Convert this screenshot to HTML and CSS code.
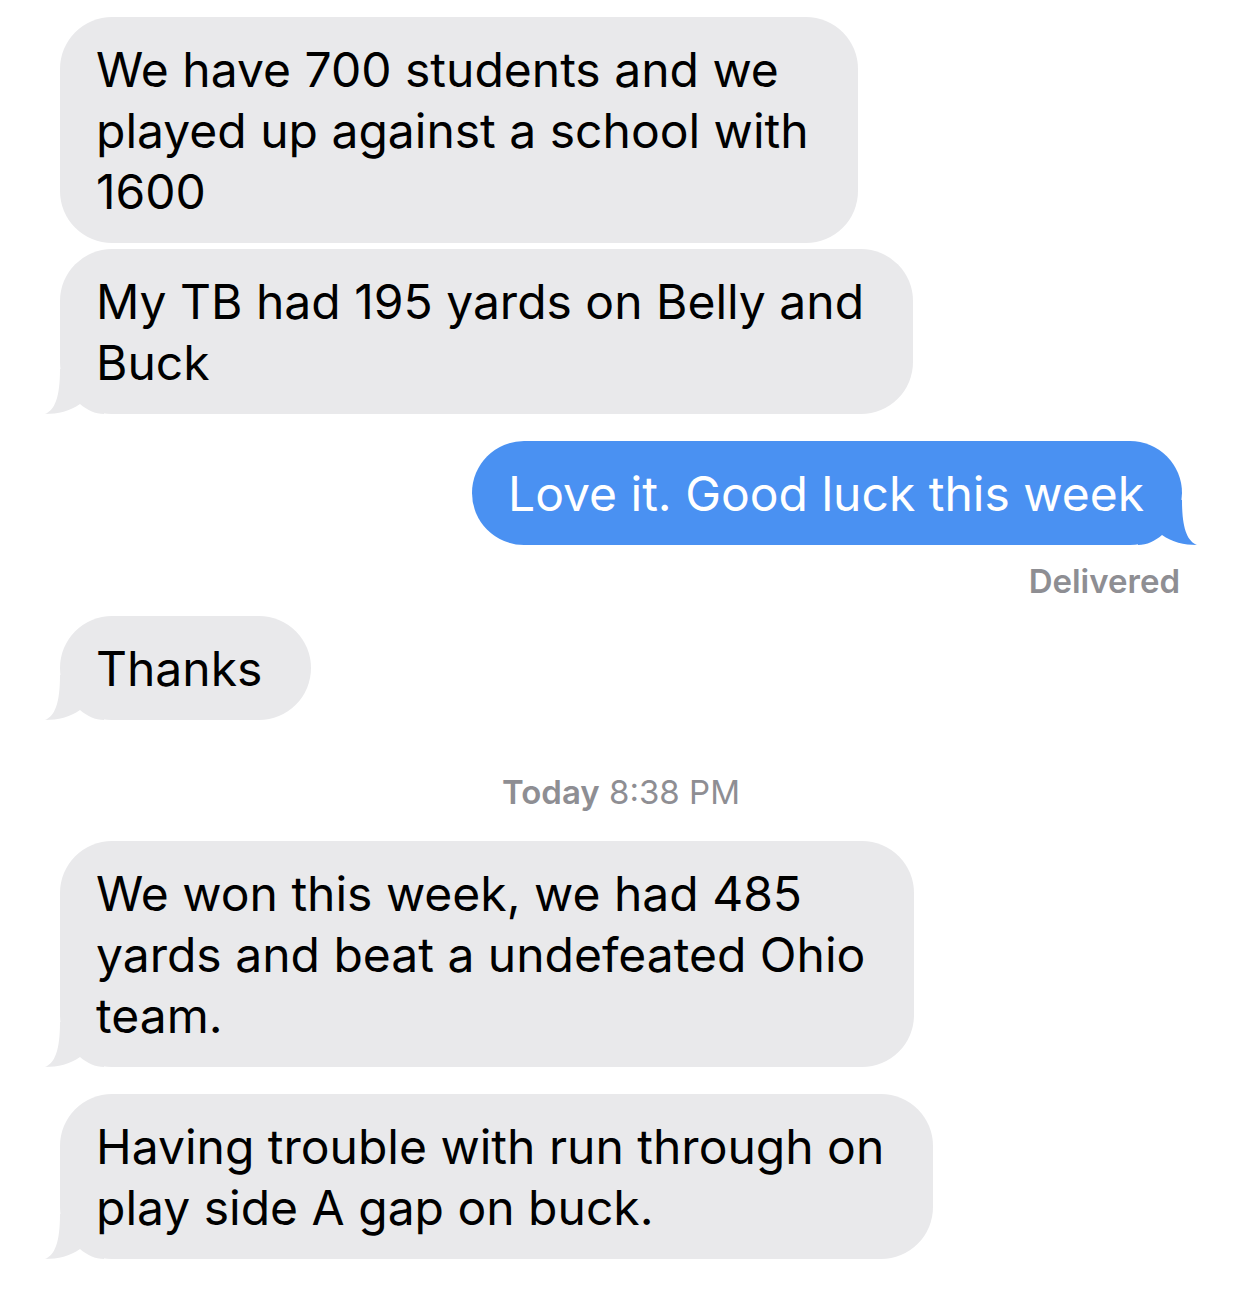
FILE: index.html
```html
<!DOCTYPE html>
<html lang="en">
<head>
  <meta charset="UTF-8" />
  <title>Messages</title>
  <link rel="stylesheet" href="styles.css">
</head>
<body>
  <div class="thread">
    <!-- first group from them -->
    <div class="bubble them">We have 700 students and we<br>played up against a school with<br>1600</div>
    <div class="bubble them tail close">My TB had 195 yards on Belly and<br>Buck
      <svg class="tail-icon" viewBox="0 0 60 45"><path d="M16 0 C16 28 11 41 1 45 C14 45 26 42 36 35 C43 41 51 45 60 45 L60 0 Z"/></svg>
    </div>

    <!-- my reply -->
    <div class="bubble me tail">Love it. Good luck this week
      <svg class="tail-icon" viewBox="0 0 60 45"><path d="M16 0 C16 28 11 41 1 45 C14 45 26 42 36 35 C43 41 51 45 60 45 L60 0 Z"/></svg>
    </div>
    <div class="receipt">Delivered</div>

    <div class="bubble them tail thanks">Thanks
      <svg class="tail-icon" viewBox="0 0 60 45"><path d="M16 0 C16 28 11 41 1 45 C14 45 26 42 36 35 C43 41 51 45 60 45 L60 0 Z"/></svg>
    </div>

    <div class="stamp"><b>Today</b> 8:38 PM</div>

    <div class="bubble them tail">We won this week, we had 485<br>yards and beat a undefeated Ohio<br>team.
      <svg class="tail-icon" viewBox="0 0 60 45"><path d="M16 0 C16 28 11 41 1 45 C14 45 26 42 36 35 C43 41 51 45 60 45 L60 0 Z"/></svg>
    </div>
    <div class="bubble them tail next">Having trouble with run through on<br>play side A gap on buck.
      <svg class="tail-icon" viewBox="0 0 60 45"><path d="M16 0 C16 28 11 41 1 45 C14 45 26 42 36 35 C43 41 51 45 60 45 L60 0 Z"/></svg>
    </div>
  </div>
</body>
</html>
```

FILE: styles.css
```css
/* Conversa estilo iMessage */
body {
  margin: 0;
  background: #fff;
  font-family: Inter, "Noto Sans", sans-serif;
}

.thread {
  display: flex;
  flex-direction: column;
  align-items: flex-start;
  padding: 17px 60px 0 60px;
}

.bubble {
  position: relative;
  z-index: 0;
  font-size: 48px;
  line-height: 61px;
  padding: 22px 49px 21px 36px;
  border-radius: 52px;
}

.them {
  background: #e9e9eb;
  color: #000;
}

.me {
  align-self: flex-end;
  background: #4a91f2;
  color: #fff;
  padding-right: 38px;
  margin-top: 27px;
}

.close {
  margin-top: 6px;
}

.next {
  margin-top: 27px;
}

/* rabinho do balão, atrás do texto */
.tail-icon {
  position: absolute;
  z-index: -1;
  bottom: 0;
  left: -16px;
  width: 60px;
  height: 45px;
}

.them .tail-icon path {
  fill: #e9e9eb;
}

.me .tail-icon {
  left: auto;
  right: -16px;
  transform: scaleX(-1);
}

.me .tail-icon path {
  fill: #4a91f2;
}

.receipt {
  align-self: flex-end;
  margin: 17px 2px 0 0;
  font-size: 33px;
  line-height: 38px;
  font-weight: 600;
  color: #8e8e93;
}

.thanks {
  margin-top: 16px;
}

.stamp {
  align-self: center;
  margin: 53px 0 30px 0;
  font-size: 33px;
  line-height: 38px;
  color: #8e8e93;
}

.stamp b {
  font-weight: 600;
}
```
